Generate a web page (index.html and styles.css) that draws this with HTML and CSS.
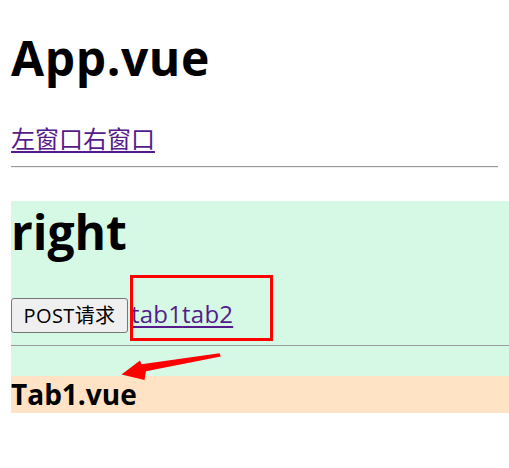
FILE: index.html
```html
<!DOCTYPE html>
<html lang="zh-CN">
<head>
<meta charset="utf-8">
<title>App.vue</title>
<link rel="stylesheet" href="styles.css">
</head>
<body>
<div class="app">
  <h1 class="app-title">App.vue</h1>
  <p class="nav"><a class="link" href="#left">左窗口</a><a class="link" href="#right">右窗口</a></p>
  <hr class="rule">
  <div class="right">
    <h1 class="right-title">right</h1>
    <p class="actions"><button class="btn" type="button">POST请求</button><a class="link tabs" href="#tab1">tab1</a><a class="link" href="#tab2">tab2</a></p>
    <hr class="rule rule-inner">
    <div class="tab">
      <h3 class="tab-title">Tab1.vue</h3>
    </div>
  </div>

  <div class="mark-box"></div>
  <svg class="mark-arrow" width="509" height="468" viewBox="0 0 509 468" aria-hidden="true">
    <polygon points="121.5,374.5 140,360.5 141.5,364.2 219.5,353.3 220.8,356.6 146,371.2 144.5,380" fill="#ff0000"/>
  </svg>
</div>
</body>
</html>
```

FILE: styles.css
```css
html, body {
  margin: 0;
  padding: 0;
  background: #ffffff;
}

body {
  font-family: "Open Sans", "Noto Sans CJK SC", sans-serif;
  font-size: 24px;
  color: #000000;
}

.app {
  position: relative;
  padding: 0 11px;
  height: 468px;
  box-sizing: border-box;
  overflow: hidden;
}

.app-title {
  margin: 30px 0 0;
  font-size: 48px;
  line-height: 56px;
  font-weight: 700;
  letter-spacing: 0.6px;
}

.nav {
  margin: 37px 0 0;
  line-height: 32px;
}

.link {
  color: #551a8b;
  text-decoration: underline;
  text-underline-offset: 3px;
}

.tabs {
  margin-left: 0;
}

.rule {
  margin: 11px 0;
  height: 0;
  border: 0;
  border-top: 1px solid #9a9a9a;
  border-bottom: 1px solid #eeeeee;
}

.right {
  margin: 33px -11px 0 0;
  padding-top: 3px;
  background: #d5f9e4;
}

.right-title {
  margin: 0;
  font-size: 48px;
  line-height: 56px;
  font-weight: 700;
}

.actions {
  margin: 38px 0 0;
  line-height: 32px;
  letter-spacing: 0.2px;
}

.btn {
  display: inline-block;
  box-sizing: border-box;
  width: 117px;
  height: 35px;
  margin: 0 3px 0 0;
  padding: 0;
  text-align: center;
  font-family: "Open Sans", "Noto Sans CJK SC", sans-serif;
  font-size: 20px;
  line-height: 33px;
  letter-spacing: 0.4px;
  color: #000000;
  background: #efefef;
  border: 1px solid #767676;
  border-radius: 3px;
  vertical-align: baseline;
}

.rule-inner {
  margin: 12px 0;
  border-top-color: #9a9a9a;
  border-bottom-color: #d5f9e4;
}

.tab {
  margin-top: 29px;
  background: #ffe3c4;
}

.tab-title {
  margin: 0;
  font-size: 28px;
  line-height: 37px;
  font-weight: 700;
}

.mark-box {
  position: absolute;
  left: 130px;
  top: 275px;
  width: 143px;
  height: 66px;
  box-sizing: border-box;
  border: 3px solid #ff0000;
}

.mark-arrow {
  position: absolute;
  left: 0;
  top: 0;
  pointer-events: none;
}
```
